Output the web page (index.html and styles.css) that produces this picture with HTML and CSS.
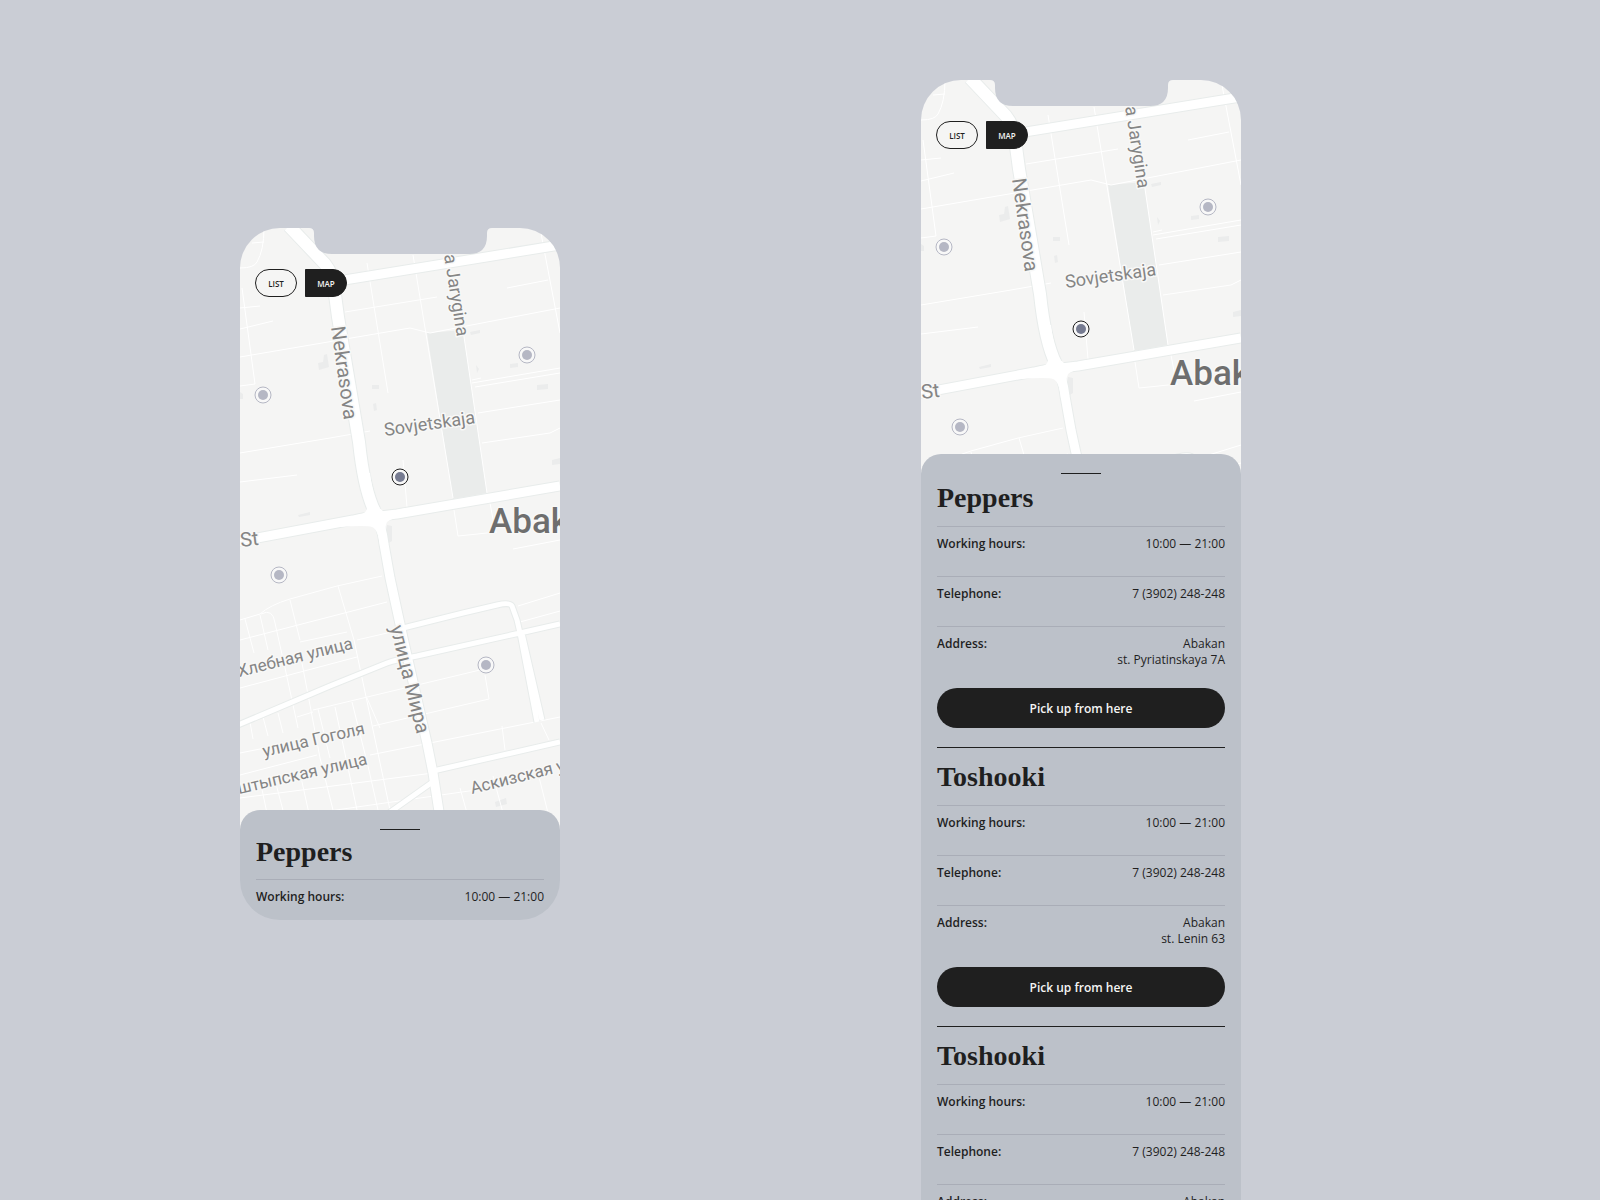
FILE: index.html
```html
<!DOCTYPE html>
<html lang="en">
<head>
    <meta charset="UTF-8">
    <meta name="viewport" content="width=device-width, initial-scale=1.0">
    <title>Pick-up points</title>
    <link rel="stylesheet" href="styles.css">
</head>
<body>
    <!-- Streets shared by both maps -->
    <svg class="defs" width="0" height="0" aria-hidden="true">
        <defs>
            <g id="streets">
                <!-- Park and buildings -->
                <path class="park" d="M187 105 L223 102 L247 265 L213 271 Z"/>
                <path class="building" d="M78 135l5 -1 1 -7 3 -1 2 13 -10 3zM132 157h7v4h-7zM133 176l3 -1 1 7 -3 1zM230 104l10 -2v3l-9 2zM236 137l3 4 -2 4zM270 136l8 -1v4l-8 1zM297 157l11 -1v5l-11 1zM58 287l12 -3v3l-11 2zM312 232l8 -2v6l-8 1zM147 297l5 1v15l-5 3zM255 574l11 -4 1 6 -11 3zM0 164l3 2v5h-3z"/>
                <!-- Side streets -->
                <path class="street" d="M0 129 L170 100 L190 105 L320 80M105 84L197 69M127 35L148 165M173 27L213 270M223 102L247 265M232 155L320 140M235 159L320 145M238 185L320 172M242 215L310 205L320 200M267 60L308 52M300 0L320 105M0 225L90 210L130 203M0 101L33 93M0 80L20 78M2 60L15 156L0 158M24 0Q24 22 17 34Q14 40 0 40M12 15L24 14M0 254L57 247M163 232L167 279M214 282L218 308L257 304M250 275L255 302M273 321L320 312M232 152L241 150"/>
                <path class="street" d="M0 392L20 386Q30 377 50 371L97 358L142 348M0 412L147 374M98 358L114 412L150 582M50 372L60 412M5 391L14 425M20 387L28 422M21 386Q33 380 35 395L45 440L58 500M117 412L160 402M60 414L107 404M0 460L117 429M73 482L240 442M57 489L73 484M245 447L249 471L133 498M130 527L320 489M262 498L265 522M301 495L309 512M278 378L320 365M280 394L320 383M0 547L77 527M0 525L25 520M0 570L193 545M40 590L250 560M62 435L80 530L93 582M95 479L117 582M112 474L128 538L138 582M127 470L140 500M78 481L90 530M10 494L13 511M23 489L28 508M38 485L43 505M20 552L28 590M35 552L45 590M60 545L70 590M220 560L227 585M253 548L263 585M298 545L308 585"/>
                <!-- Main roads: soft edge first, white surface on top -->
                <path class="road-edge w12" d="M49 -2 L85 36 Q93 46 94 59 L98 89 L119 214 Q124 262 135 284"/>
                <path class="road-edge w9" d="M92 54 L320 17M135 286Q142 298 144 316L150 350L163 410L187 515L193 545L200 590M-4 314L113 292Q125 289 140 288L157 286L320 258"/>
                <path class="road-edge w6" d="M163 400L223 385L257 377Q270 374 272 378L277 392L280 405L297 494M282 405L302 492M-2 497L90 458L147 435Q155 432 177 428L280 405L320 396M193 543L320 514M194 553L146 587"/>
                <path class="road w12" d="M49 -2 L85 36 Q93 46 94 59 L98 89 L119 214 Q124 262 135 284"/>
                <path class="road w9" d="M92 54 L320 17M135 286Q142 298 144 316L150 350L163 410L187 515L193 545L200 590M-4 314L113 292Q125 289 140 288L157 286L320 258"/>
                <path class="road w6" d="M163 400L223 385L257 377Q270 374 272 378L277 392L280 405L297 494M282 405L302 492M-2 497L90 458L147 435Q155 432 177 428L280 405L320 396M193 543L320 514M194 553L146 587"/>
                <path class="junction" d="M100 291L122 286Q128 284 127 276L122 245H130Q134 278 143 283Q150 284 166 280V288Q151 290 147 294Q144 300 147 318L140 318Q138 301 132 299Q126 297 100 299Z"/>
            </g>
            <g id="pin">
                <circle class="pin-ring" r="8"/>
                <circle class="pin-dot" r="5"/>
            </g>
            <path id="notch" d="M66 -2V0H69Q74 0 74 5V8Q74 26 92 26H229Q247 26 247 8V5Q247 0 252 0H255V-2Z"/>
        </defs>
    </svg>

    <main class="stage">
        <section class="phone phone-collapsed">
            <div class="map">
                <svg class="map-view" viewBox="0 0 320 602" preserveAspectRatio="xMidYMin slice" role="img" aria-label="Map of Abakan">
                    <use href="#streets"/>
                    <g class="map-labels">
                        <text class="big" transform="translate(91 99) rotate(82)">Nekrasova</text>
                        <text transform="translate(204 27) rotate(81)">a Jarygina</text>
                        <text transform="translate(145 208) rotate(-8)">Sovjetskaja</text>
                        <text class="big" transform="translate(1 319) rotate(-7)">St</text>
                        <text class="city" x="249" y="305">Abak</text>
                        <text class="cyr" transform="translate(-1 449) rotate(-14)">Хлебная улица</text>
                        <text class="big" transform="translate(150 399) rotate(76)">улица Мира</text>
                        <text class="cyr" transform="translate(24 529) rotate(-13)">улица Гоголя</text>
                        <text class="cyr" transform="translate(-1 566) rotate(-13)">штыпская улица</text>
                        <text class="cyr" transform="translate(232 566) rotate(-14)">Аскизская у</text>
                    </g>
                    <use href="#pin" class="pin" x="23" y="167"/>
                    <use href="#pin" class="pin" x="287" y="127"/>
                    <use href="#pin" class="pin pin-active" x="160" y="249"/>
                    <use href="#pin" class="pin" x="39" y="347"/>
                    <use href="#pin" class="pin" x="246" y="437"/>
                    <use href="#notch" class="notch"/>
                </svg>
                <div class="view-switch">
                    <button type="button" class="view-btn">LIST</button>
                    <button type="button" class="view-btn active">MAP</button>
                </div>
            </div>
            <div class="sheet">
                <div class="handle"></div>
                <article class="store">
                    <h2>Peppers</h2>
                    <dl>
                        <div class="row"><dt>Working hours:</dt><dd>10:00 — 21:00</dd></div>
                    </dl>
                </article>
            </div>
        </section>

        <section class="phone phone-expanded">
            <div class="map">
                <svg class="map-view" viewBox="0 0 320 394" preserveAspectRatio="xMidYMin slice" role="img" aria-label="Map of Abakan">
                    <use href="#streets"/>
                    <g class="map-labels">
                        <text class="big" transform="translate(91 99) rotate(82)">Nekrasova</text>
                        <text transform="translate(204 27) rotate(81)">a Jarygina</text>
                        <text transform="translate(145 208) rotate(-8)">Sovjetskaja</text>
                        <text class="big" transform="translate(1 319) rotate(-7)">St</text>
                        <text class="city" x="249" y="305">Abak</text>
                    </g>
                    <use href="#pin" class="pin" x="23" y="167"/>
                    <use href="#pin" class="pin" x="287" y="127"/>
                    <use href="#pin" class="pin pin-active" x="160" y="249"/>
                    <use href="#pin" class="pin" x="39" y="347"/>
                    <use href="#notch" class="notch"/>
                </svg>
                <div class="view-switch">
                    <button type="button" class="view-btn">LIST</button>
                    <button type="button" class="view-btn active">MAP</button>
                </div>
            </div>
            <div class="sheet">
                <div class="handle"></div>
                <article class="store">
                    <h2>Peppers</h2>
                    <dl>
                        <div class="row"><dt>Working hours:</dt><dd>10:00 — 21:00</dd></div>
                        <div class="row"><dt>Telephone:</dt><dd>7 (3902) 248-248</dd></div>
                        <div class="row"><dt>Address:</dt><dd>Abakan<br>st. Pyriatinskaya 7A</dd></div>
                    </dl>
                    <button type="button" class="pickup">Pick up from here</button>
                </article>
                <article class="store">
                    <h2>Toshooki</h2>
                    <dl>
                        <div class="row"><dt>Working hours:</dt><dd>10:00 — 21:00</dd></div>
                        <div class="row"><dt>Telephone:</dt><dd>7 (3902) 248-248</dd></div>
                        <div class="row"><dt>Address:</dt><dd>Abakan<br>st. Lenin 63</dd></div>
                    </dl>
                    <button type="button" class="pickup">Pick up from here</button>
                </article>
                <article class="store">
                    <h2>Toshooki</h2>
                    <dl>
                        <div class="row"><dt>Working hours:</dt><dd>10:00 — 21:00</dd></div>
                        <div class="row"><dt>Telephone:</dt><dd>7 (3902) 248-248</dd></div>
                        <div class="row"><dt>Address:</dt><dd>Abakan</dd></div>
                    </dl>
                </article>
            </div>
        </section>
    </main>
</body>
</html>
```
FILE: styles.css
```css
* {
    box-sizing: border-box;
}

body {
    margin: 0;
    background-color: #cacdd5;
    color: #1f1f1f;
    font-family: 'Open Sans', sans-serif;
    font-size: 12px;
    line-height: 16px;
}

.defs {
    position: absolute;
}

.stage {
    display: flex;
    justify-content: space-between;
    align-items: flex-start;
    height: 100vh;
    padding: 80px 359px 0 15%;
    overflow: hidden;
}

.phone {
    width: 320px;
    flex-shrink: 0;
    border-radius: 40px;
    overflow: hidden;
}

.phone-collapsed {
    margin-top: 148px;
}

/* Map */
.map {
    position: relative;
    background-color: #f5f5f4;
}

.map-view {
    display: block;
    width: 100%;
}

.park {
    fill: #eaeceb;
}

.building {
    fill: #ebecec;
}

.street {
    fill: none;
    stroke: #ffffff;
    stroke-width: 1px;
}

.road-edge {
    fill: none;
    stroke: #e8eceb;
    stroke-linejoin: round;
}

.road {
    fill: none;
    stroke: #ffffff;
    stroke-linejoin: round;
}

.junction {
    fill: #ffffff;
}

.road-edge.w12 { stroke-width: 14px; }
.road-edge.w9 { stroke-width: 11px; }
.road-edge.w6 { stroke-width: 7px; }
.road.w12 { stroke-width: 12px; }
.road.w9 { stroke-width: 9px; }
.road.w6 { stroke-width: 5px; }

.map-labels {
    font-family: Roboto, sans-serif;
    font-size: 18px;
    fill: #858585;
    stroke: #f8f8f7;
    stroke-width: 3px;
    stroke-linejoin: round;
    paint-order: stroke;
}

.map-labels .big {
    font-size: 20px;
}

.map-labels .cyr {
    font-size: 17px;
}

.map-labels .city {
    font-size: 35px;
    font-weight: 500;
    fill: #6e6e6e;
}

.pin-ring {
    fill: #f8f8f8;
    stroke: currentColor;
    stroke-width: 1px;
}

.pin-dot {
    fill: var(--dot);
}

.pin {
    color: #b5b7c4;
    --dot: #b5b7c4;
}

.pin-active {
    color: #1f1f1f;
    --dot: #767b91;
}

.notch {
    fill: #cacdd5;
}

.view-switch {
    position: absolute;
    top: 41px;
    left: 15px;
    display: flex;
    gap: 8px;
}

.view-btn {
    width: 42px;
    height: 28px;
    padding: 0;
    border: 1px solid #1f1f1f;
    border-radius: 14px;
    background-color: #f5f5f4;
    color: #1f1f1f;
    font-family: inherit;
    font-size: 8px;
    font-weight: 600;
    cursor: pointer;
}

.view-btn.active {
    border-radius: 0 14px 14px 0;
    background-color: #1f1f1f;
    color: #f5f5f4;
}

/* Bottom sheet */
.sheet {
    position: relative;
    margin-top: -20px;
    padding: 19px 16px 0;
    border-radius: 20px 20px 0 0;
    background-color: #bcc1c9;
}

.phone-collapsed .sheet {
    padding-bottom: 6px;
}

.handle {
    width: 40px;
    height: 1px;
    margin: 0 auto;
    background-color: #1f1f1f;
}

.store h2 {
    margin: 0;
    padding-top: 8px;
    height: 52px;
    font-family: 'Liberation Serif', serif;
    font-size: 28px;
    font-weight: 700;
    line-height: 32px;
}

.phone-collapsed .store h2 {
    padding-top: 6px;
    height: 49px;
}

.store + .store {
    margin-top: 19px;
    border-top: 1px solid #1f1f1f;
}

.store + .store h2 {
    padding-top: 13px;
    height: 57px;
}

.store dl {
    margin: 0;
}

.row {
    display: flex;
    justify-content: space-between;
    height: 50px;
    padding-top: 9px;
    border-top: 1px solid #a9adb7;
}

.phone-collapsed .row {
    height: 35px;
}

.row:nth-child(3) {
    height: 62px;
}

.row dt {
    font-weight: 600;
}

.row dd {
    margin: 0;
    text-align: right;
}

.pickup {
    display: block;
    width: 100%;
    height: 40px;
    border: none;
    border-radius: 20px;
    background-color: #1f1f1f;
    color: #f5f5f4;
    font-family: inherit;
    font-size: 12px;
    font-weight: 600;
    cursor: pointer;
}
```
